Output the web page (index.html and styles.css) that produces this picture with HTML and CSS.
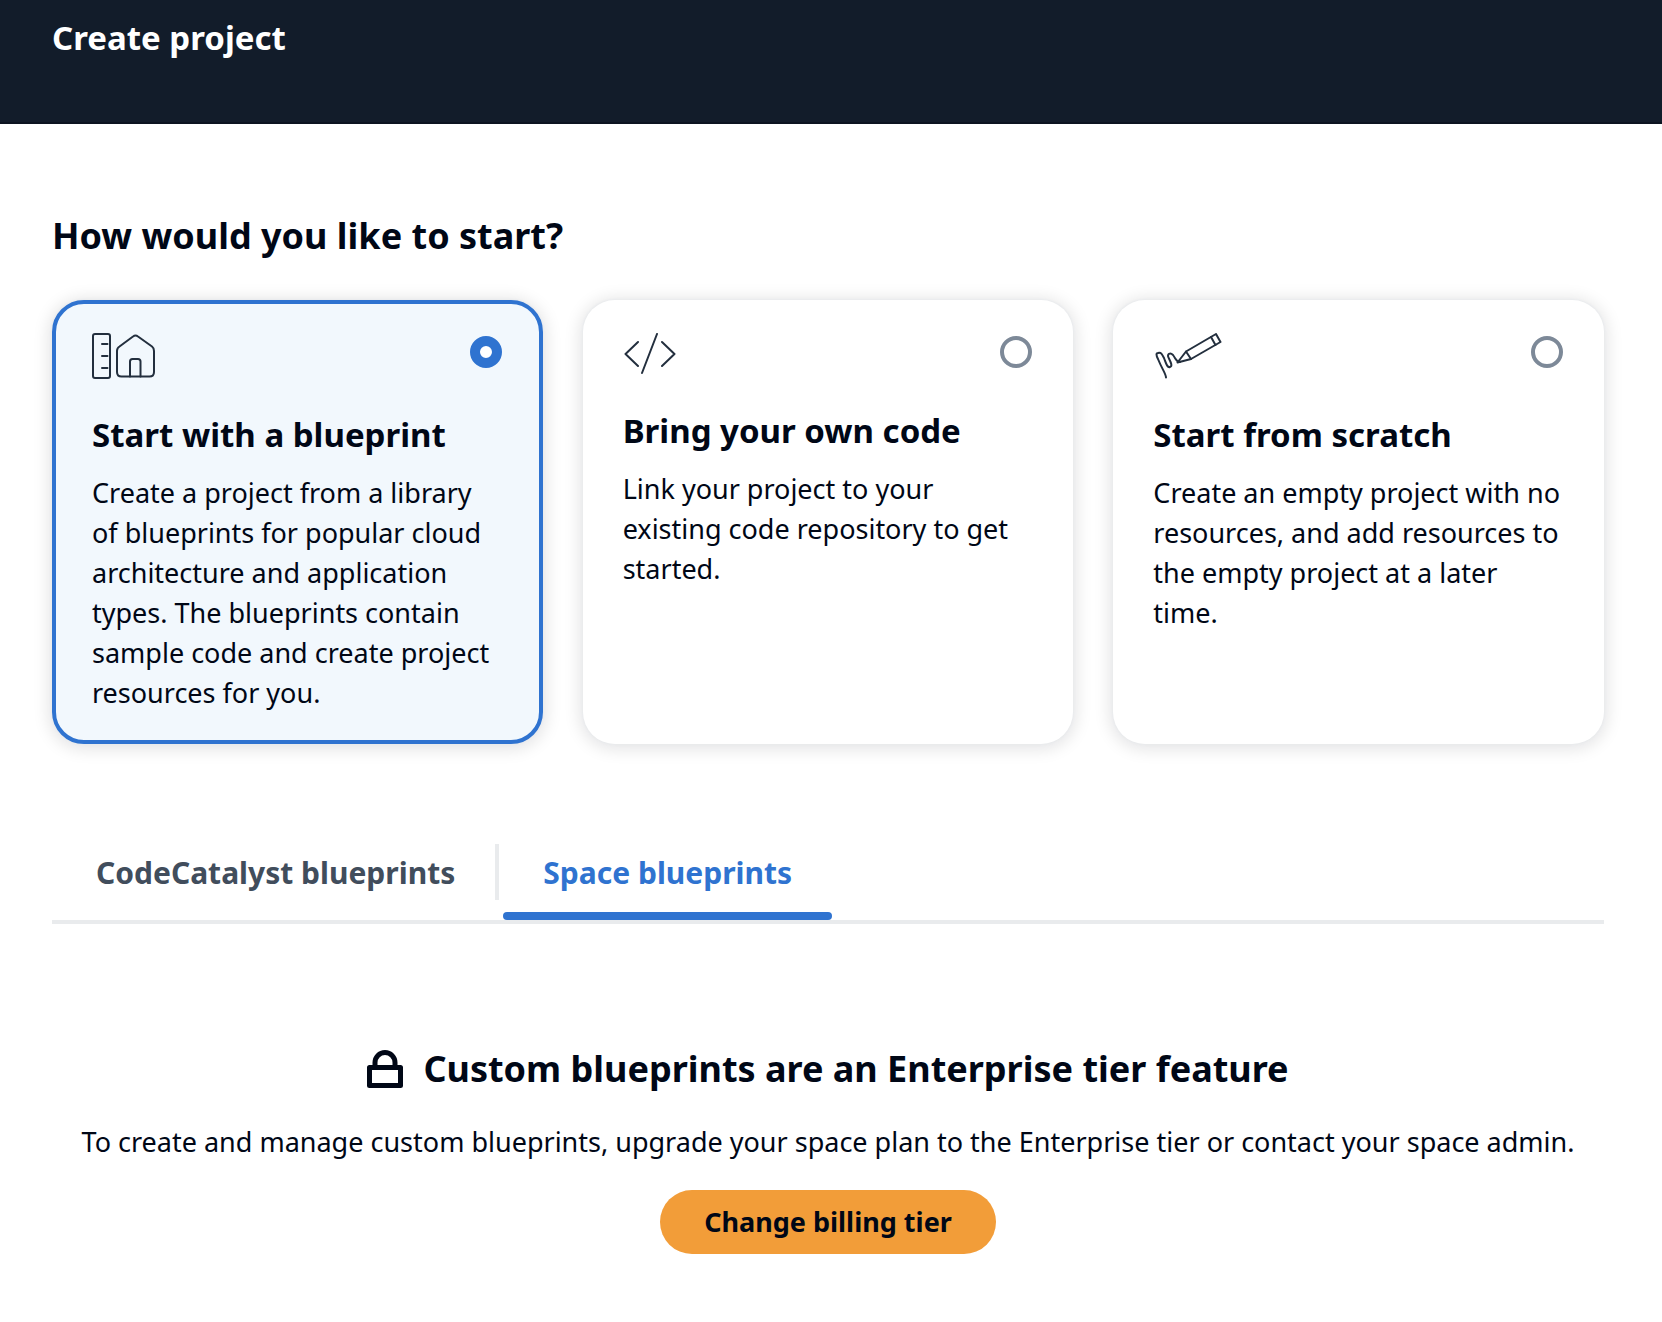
FILE: index.html
```html
<!DOCTYPE html>
<html lang="en">
<head>
  <meta charset="utf-8">
  <title>Create project</title>
  <link rel="stylesheet" href="styles.css">
</head>
<body>
  <header class="header">
    <h1 class="header-title">Create project</h1>
  </header>

  <main class="main">
    <h2 class="section-title" id="start-title">How would you like to start?</h2>
    <div class="cards" role="radiogroup" aria-labelledby="start-title">
      <label class="card">
        <span class="card-top">
          <svg class="card-icon" width="64" height="46" viewBox="0 0 64 46">
            <rect x="1" y="1" width="17" height="44" rx="2"/>
            <path d="M10 11H15.500M10 23H15.500M10 35H15.500"/>
            <path d="M25 18Q25 15 27.500 13.500L41 3.500Q43.500 1.500 46 3.500L60 13.500Q62 15 62 18V39Q62 43.500 57.500 43.500H29.500Q25 43.500 25 39Z"/>
            <path d="M38 43.500V28.500Q38 26 40.500 26H46Q48.500 26 48.500 28.500V43.500"/>
          </svg>
          <input type="radio" class="card-radio" name="start" value="blueprint" checked>
        </span>
        <span class="card-title">Start with a blueprint</span>
        <span class="card-text">Create a project from a library of blueprints for popular cloud architecture and application types. The blueprints contain sample code and create project resources for you.</span>
      </label>
      <label class="card">
        <span class="card-top">
          <svg class="card-icon" width="54" height="42" viewBox="0 0 54 42">
            <path d="M15 9L2.500 21L15 33M34 1L19 40M39 9L51.500 21L39 33"/>
          </svg>
          <input type="radio" class="card-radio" name="start" value="code">
        </span>
        <span class="card-title">Bring your own code</span>
        <span class="card-text">Link your project to your existing code repository to get started.</span>
      </label>
      <label class="card">
        <span class="card-top">
          <svg class="card-icon" width="70" height="46" viewBox="0 0 70 46">
            <path d="M13 44.500C13 41 9 36 5 26C3 22 3 20 5 20C8 19 9 21 11 25C13 30 14 35 17 34C21 33 15 25 15 23C15 20 18 20 20 22C23 26 23 29 27 29"/>
            <path d="M24.500 29.500L33 18.500L63 1L67.500 9L38 26Z"/>
            <path d="M33 18.500L38 26M58 4L62.500 12"/>
          </svg>
          <input type="radio" class="card-radio" name="start" value="scratch">
        </span>
        <span class="card-title">Start from scratch</span>
        <span class="card-text">Create an empty project with no resources, and add resources to the empty project at a later time.</span>
      </label>
    </div>

    <div class="tabs" role="tablist">
      <button type="button" class="tab" role="tab" aria-selected="false">CodeCatalyst blueprints</button>
      <button type="button" class="tab tab-active" role="tab" aria-selected="true">Space blueprints</button>
    </div>

    <section class="upgrade">
      <h2 class="upgrade-title">
        <svg class="lock" width="36" height="38" viewBox="0 0 36 38">
          <rect x="2.500" y="17.500" width="31" height="18"/>
          <path d="M8 17V12.500a10 10 0 0 1 20 0V17"/>
        </svg>
        Custom blueprints are an Enterprise tier feature
      </h2>
      <p class="upgrade-text">To create and manage custom blueprints, upgrade your space plan to the Enterprise tier or contact your space admin.</p>
      <button type="button" class="button">Change billing tier</button>
    </section>
  </main>
</body>
</html>
```
FILE: styles.css
```css
* {
  box-sizing: border-box;
}
body {
  margin: 0;
  font-family: "Noto Sans", "Open Sans", sans-serif;
  font-size: 27px;
  line-height: 40px;
  color: #000716;
  background: #fff;
}
.header {
  padding: 15px 52px 61px;
  background: #121c2a;
  border-bottom: 2px solid #0c1420;
}
.header-title {
  margin: 0;
  font-size: 33px;
  line-height: 46px;
  color: #fff;
}
.main {
  padding: 88px 58px 64px 52px;
}
.section-title {
  margin: 0 0 40px;
  font-size: 36px;
  line-height: 48px;
}
.cards {
  display: grid;
  grid-template-columns: repeat(3, 1fr);
  gap: 40px;
}
.card {
  display: flex;
  flex-direction: column;
  padding: 29px 37px 27px 36px;
  border: 4px solid transparent;
  border-radius: 32px;
  background: #fff;
  box-shadow: 0 0 2px 1px #e9ebed, 0 2px 16px 4px rgba(0, 7, 22, 0.1);
  cursor: pointer;
}
.card:has(.card-radio:checked) {
  border-color: #2f73d0;
  background: #f2f8fd;
}
.card-top {
  display: flex;
  justify-content: space-between;
  align-items: flex-start;
  margin-bottom: 32px;
}
.card-icon {
  fill: none;
  stroke: #232f3e;
  stroke-width: 2;
  stroke-linejoin: round;
  stroke-linecap: round;
}
.card-radio {
  appearance: none;
  width: 32px;
  height: 32px;
  margin: 3px 0 0;
  border: 4px solid #7d8998;
  border-radius: 50%;
  background: #fff;
}
.card-radio:checked {
  border: 10px solid #2f73d0;
}
.card-title {
  margin-bottom: 14px;
  font-size: 33px;
  line-height: 48px;
  font-weight: 700;
}
.tabs {
  display: flex;
  margin-top: 100px;
  border-bottom: 4px solid #e9ebed;
}
.tab {
  position: relative;
  padding: 8px 44px 26px;
  border: 0;
  background: none;
  font-family: inherit;
  font-size: 30px;
  line-height: 42px;
  font-weight: 700;
  color: #414d5c;
  cursor: pointer;
}
.tab:first-child::after {
  content: "";
  position: absolute;
  top: 0;
  right: 0;
  width: 4px;
  height: 56px;
  background: #e9ebed;
}
.tab-active {
  color: #2f73d0;
}
.tab-active::after {
  content: "";
  position: absolute;
  left: 4px;
  right: 4px;
  bottom: 0;
  height: 8px;
  border-radius: 4px;
  background: #2f73d0;
}
.upgrade {
  display: flex;
  flex-direction: column;
  align-items: center;
  padding-top: 120px;
  text-align: center;
}
.upgrade-title {
  display: flex;
  align-items: center;
  gap: 20px;
  margin: 0;
  font-size: 36px;
  line-height: 50px;
}
.lock {
  fill: none;
  stroke: #000716;
  stroke-width: 5;
  stroke-linejoin: round;
}
.upgrade-text {
  margin: 28px 0;
}
.button {
  padding: 12px 44px;
  border: 0;
  border-radius: 32px;
  background: #f29d39;
  font-family: inherit;
  font-size: 27px;
  line-height: 40px;
  font-weight: 700;
  color: #000716;
  cursor: pointer;
}
```
